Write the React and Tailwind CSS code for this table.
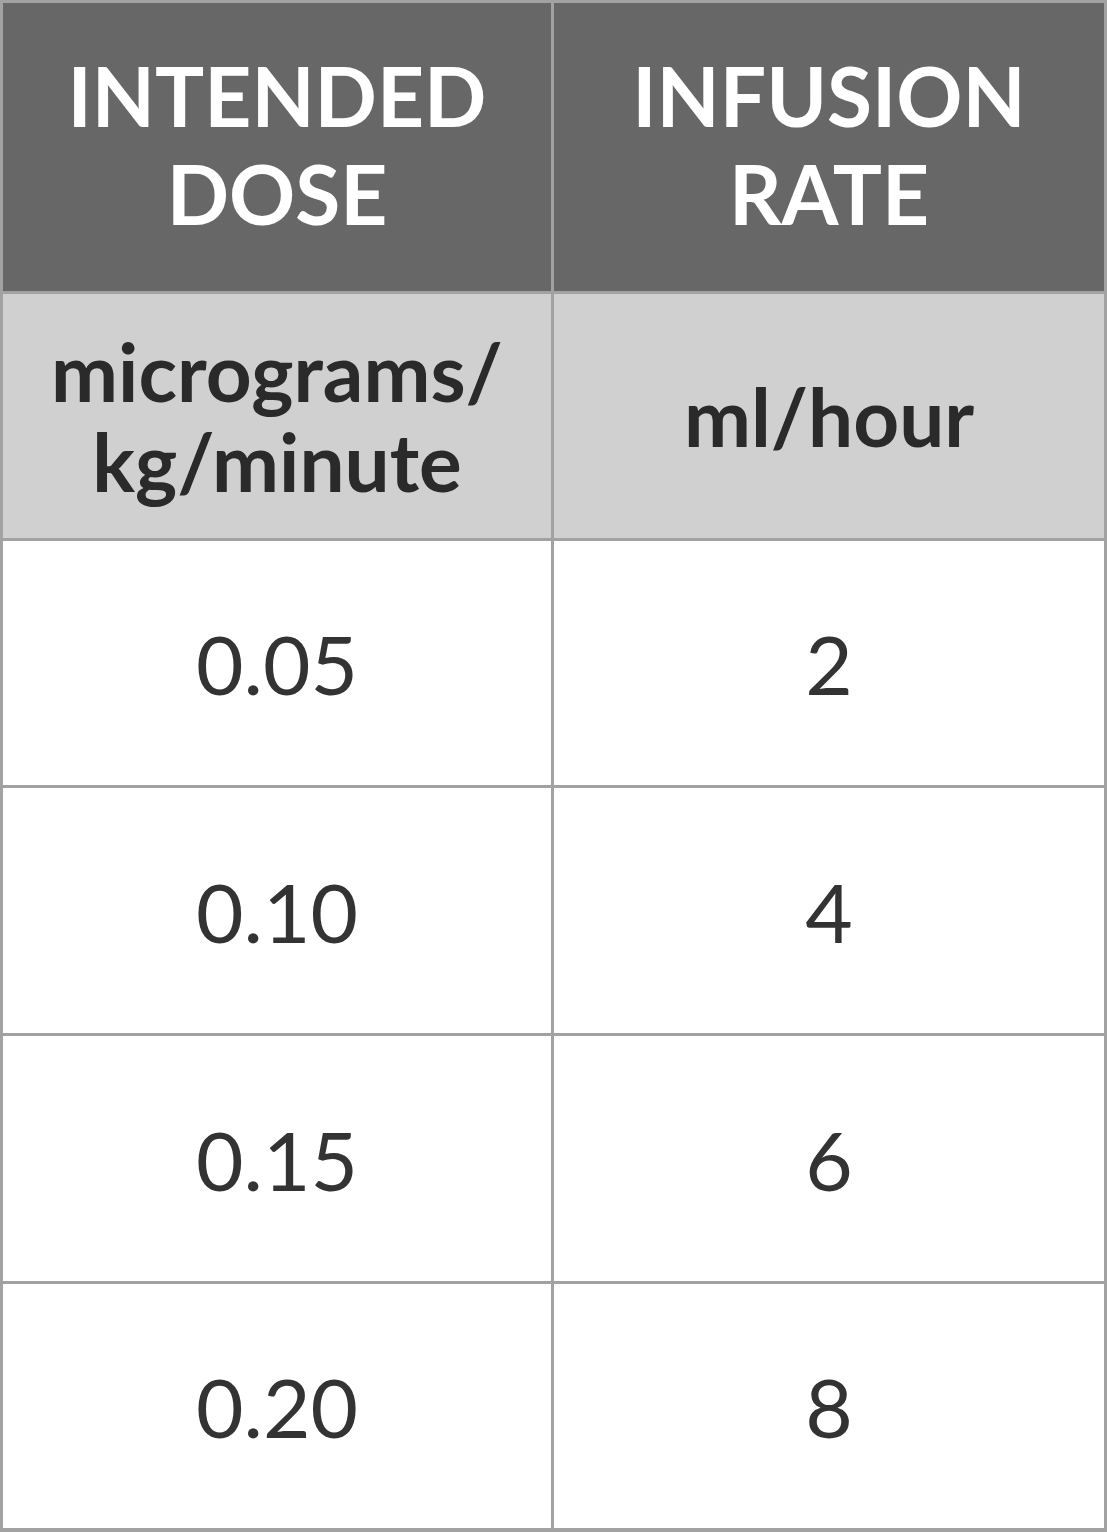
const rows = [
  ['0.05', '2'],
  ['0.10', '4'],
  ['0.15', '6'],
  ['0.20', '8'],
]

const font = { fontFamily: 'Lato, "Noto Sans", sans-serif' }

export default function App() {
  return (
    <div
      className="grid h-[1532px] w-[1107px] grid-cols-[548px_550px] grid-rows-[288px_244px_244px_245px_245px_244px] gap-[3px] bg-[#a2a2a2] px-[3px] pb-[4px] pt-[3px]"
      style={font}
    >
      {/* header */}
      {[
        ['INTENDED', 'DOSE'],
        ['INFUSION', 'RATE'],
      ].map(([a, b]) => (
        <div
          key={a}
          className="flex flex-col items-center justify-center bg-[#676767] pb-[6px] text-center text-[82px] font-bold leading-[98px] text-white"
        >
          <span>{a}</span>
          <span>{b}</span>
        </div>
      ))}

      {/* units */}
      <div className="flex flex-col items-center justify-center bg-[#d0d0d0] text-center text-[80px] font-bold leading-[90px] text-[#2a2a2a]">
        <span>micrograms/</span>
        <span>kg/minute</span>
      </div>
      <div className="flex items-center justify-center bg-[#d0d0d0] text-center text-[80px] font-bold leading-[90px] text-[#2a2a2a]">
        ml/hour
      </div>

      {/* values */}
      {rows.map(([dose, rate]) => [
        <div key={dose} className="flex items-center justify-center bg-white text-[82px] leading-none text-[#333]">
          {dose}
        </div>,
        <div key={dose + 'r'} className="flex items-center justify-center bg-white text-[82px] leading-none text-[#333]">
          {rate}
        </div>,
      ])}
    </div>
  )
}
